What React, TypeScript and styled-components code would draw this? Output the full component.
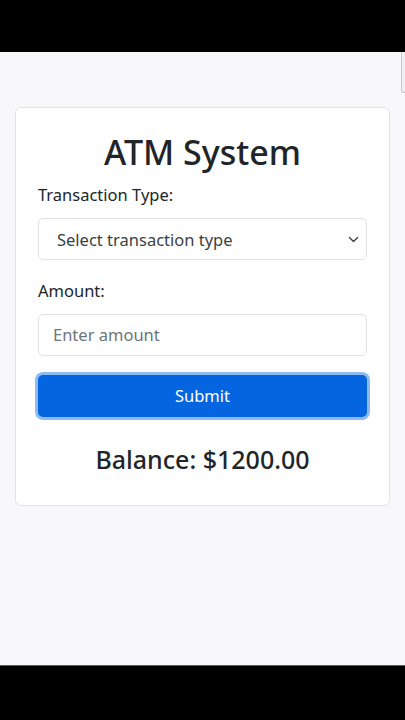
import styled, { createGlobalStyle } from 'styled-components'

const GlobalStyle = createGlobalStyle`
  html, body {
    margin: 0;
    padding: 0;
    background: #000;
  }

  body {
    font-family: 'Noto Sans', 'Open Sans', sans-serif;
    color: #212529;
  }

  * {
    box-sizing: border-box;
  }
`

export default function App() {
  return (
    <Frame>
      <GlobalStyle />
      <TopBar />
      <Viewport>
        <ScrollThumb />
        <Card>
          <Title>ATM System</Title>
          <Field>
            <Label>Transaction Type:</Label>
            <SelectBox>
              <SelectText>Select transaction type</SelectText>
              <svg width="11" height="11" viewBox="0 0 16 16">
                <path
                  d="m2 5 6 6 6-6"
                  fill="none"
                  stroke="#3d4248"
                  strokeWidth="2"
                  strokeLinecap="round"
                  strokeLinejoin="round"
                />
              </svg>
            </SelectBox>
          </Field>
          <Field>
            <Label>Amount:</Label>
            <Input placeholder="Enter amount" />
          </Field>
          <SubmitButton>Submit</SubmitButton>
          <Balance>Balance: $1200.00</Balance>
        </Card>
      </Viewport>
      <BottomBar />
    </Frame>
  )
}

const Frame = styled.div`
  width: 405px;
  height: 720px;
  display: flex;
  flex-direction: column;
  background: #000;
`

const TopBar = styled.div`
  height: 52px;
  background: #000;
`

const BottomBar = styled.div`
  flex: 1;
  background: #000;
  border-top: 1px solid #5a5a5a;
`

const Viewport = styled.div`
  position: relative;
  height: 613px;
  background: #f8f8fa;
  padding: 55px 15px 0;
`

const ScrollThumb = styled.div`
  position: absolute;
  top: 0;
  right: 0;
  width: 4px;
  height: 41px;
  background: #f0f0f2;
  border-left: 1px solid #c8c8cc;
  border-bottom: 1px solid #c8c8cc;
  border-bottom-left-radius: 3px;
`

const Card = styled.div`
  background: #fff;
  border: 1px solid #e3e4e6;
  border-radius: 6px;
  padding: 24px 22px 31px;
`

const Title = styled.h2`
  margin: 0 0 10.5px;
  text-align: center;
  font-size: 34px;
  font-weight: 500;
  line-height: 1.2;
  color: #212529;
`

const Field = styled.div`
  margin-bottom: 19px;
`

const Label = styled.label`
  display: block;
  font-size: 16.5px;
  line-height: 1.5;
  margin-bottom: 10px;
  color: #212529;
`

const SelectBox = styled.div`
  height: 42px;
  border: 1px solid #dee2e6;
  border-radius: 5px;
  background: #fff;
  display: flex;
  align-items: center;
  justify-content: space-between;
  padding: 0 7px 0 18px;
`

const SelectText = styled.span`
  font-size: 16.5px;
  color: #3a3f44;
`

const Input = styled.input`
  display: block;
  width: 100%;
  height: 42px;
  border: 1px solid #dee2e6;
  border-radius: 5px;
  background: #fff;
  padding: 0 14px;
  font-family: inherit;
  font-size: 16.5px;
  color: #212529;
  outline: none;

  &::placeholder {
    color: #6c757d;
  }
`

const SubmitButton = styled.button`
  display: block;
  width: 100%;
  height: 42px;
  margin-top: 18px;
  border: none;
  border-radius: 5px;
  background: #0565e0;
  color: #fff;
  font-family: inherit;
  font-size: 16.5px;
  box-shadow: 0 0 0 3px #8dbaf3;
  cursor: pointer;
`

const Balance = styled.h3`
  margin: 27px 0 0;
  text-align: center;
  font-size: 25px;
  font-weight: 500;
  line-height: 1.2;
  color: #212529;
`
